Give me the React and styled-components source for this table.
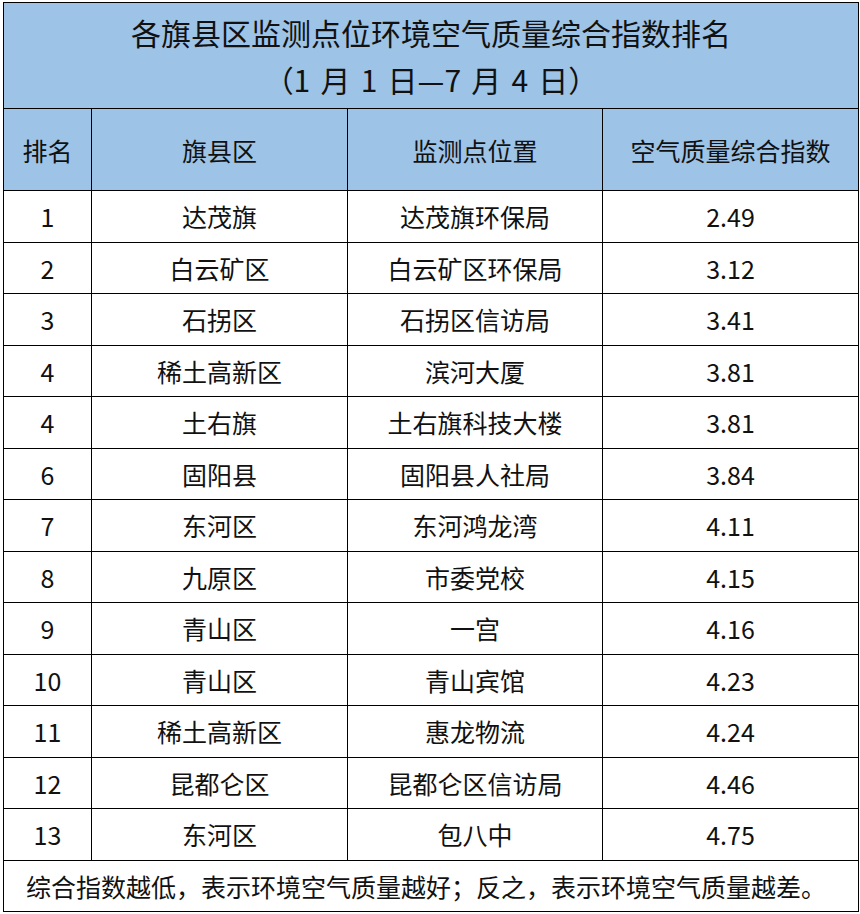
import React from "react"
import styled, { createGlobalStyle } from "styled-components"

const rows = [
  ["1", "达茂旗", "达茂旗环保局", "2.49"],
  ["2", "白云矿区", "白云矿区环保局", "3.12"],
  ["3", "石拐区", "石拐区信访局", "3.41"],
  ["4", "稀土高新区", "滨河大厦", "3.81"],
  ["4", "土右旗", "土右旗科技大楼", "3.81"],
  ["6", "固阳县", "固阳县人社局", "3.84"],
  ["7", "东河区", "东河鸿龙湾", "4.11"],
  ["8", "九原区", "市委党校", "4.15"],
  ["9", "青山区", "一宫", "4.16"],
  ["10", "青山区", "青山宾馆", "4.23"],
  ["11", "稀土高新区", "惠龙物流", "4.24"],
  ["12", "昆都仑区", "昆都仑区信访局", "4.46"],
  ["13", "东河区", "包八中", "4.75"],
]

const GlobalStyle = createGlobalStyle`
  body {
    margin: 0;
    background: #fff;
    font-family: "Noto Sans CJK SC", "Noto Sans", sans-serif;
    color: #111;
  }
`

const Page = styled.div`
  padding: 2px 0 0 3px;
`

const Table = styled.table`
  border-collapse: collapse;
  table-layout: fixed;
  width: 855px;
`

const Col = styled.col`
  width: ${(p) => p.$w}px;
`

const Title = styled.th`
  height: 105px;
  padding: 0;
  background: #9dc3e6;
  border: 1px solid #000;
  font-size: 30px;
  font-weight: 400;
  line-height: 47px;
  text-align: center;
  white-space: pre;
`

const DateLine = styled.span`
  display: block;
  word-spacing: 3.5px;
`

const Head = styled.th`
  height: 81px;
  padding: 0;
  background: #9dc3e6;
  border: 1px solid #000;
  font-size: 25px;
  font-weight: 400;
  text-align: center;
`

const Cell = styled.td`
  height: 50.5px;
  padding: 0;
  border: 1px solid #000;
  font-size: 25px;
  text-align: center;
  white-space: nowrap;
`

const Note = styled.td`
  height: 50px;
  padding: 0 0 0 22px;
  border: 1px solid #000;
  font-size: 25px;
  text-align: left;
  white-space: nowrap;
`

export default function App() {
  return (
    <Page>
      <GlobalStyle />
      <Table>
        <colgroup>
          <Col $w={88} />
          <Col $w={256} />
          <Col $w={255} />
          <Col $w={256} />
        </colgroup>
        <thead>
          <tr>
            <Title colSpan={4}>
              各旗县区监测点位环境空气质量综合指数排名
              <DateLine>（1 月 1 日—7 月 4 日）</DateLine>
            </Title>
          </tr>
          <tr>
            <Head>排名</Head>
            <Head>旗县区</Head>
            <Head>监测点位置</Head>
            <Head>空气质量综合指数</Head>
          </tr>
        </thead>
        <tbody>
          {rows.map((r, i) => (
            <tr key={i}>
              {r.map((v, j) => (
                <Cell key={j}>{v}</Cell>
              ))}
            </tr>
          ))}
          <tr>
            <Note colSpan={4}>
              综合指数越低，表示环境空气质量越好；反之，表示环境空气质量越差。
            </Note>
          </tr>
        </tbody>
      </Table>
    </Page>
  )
}
